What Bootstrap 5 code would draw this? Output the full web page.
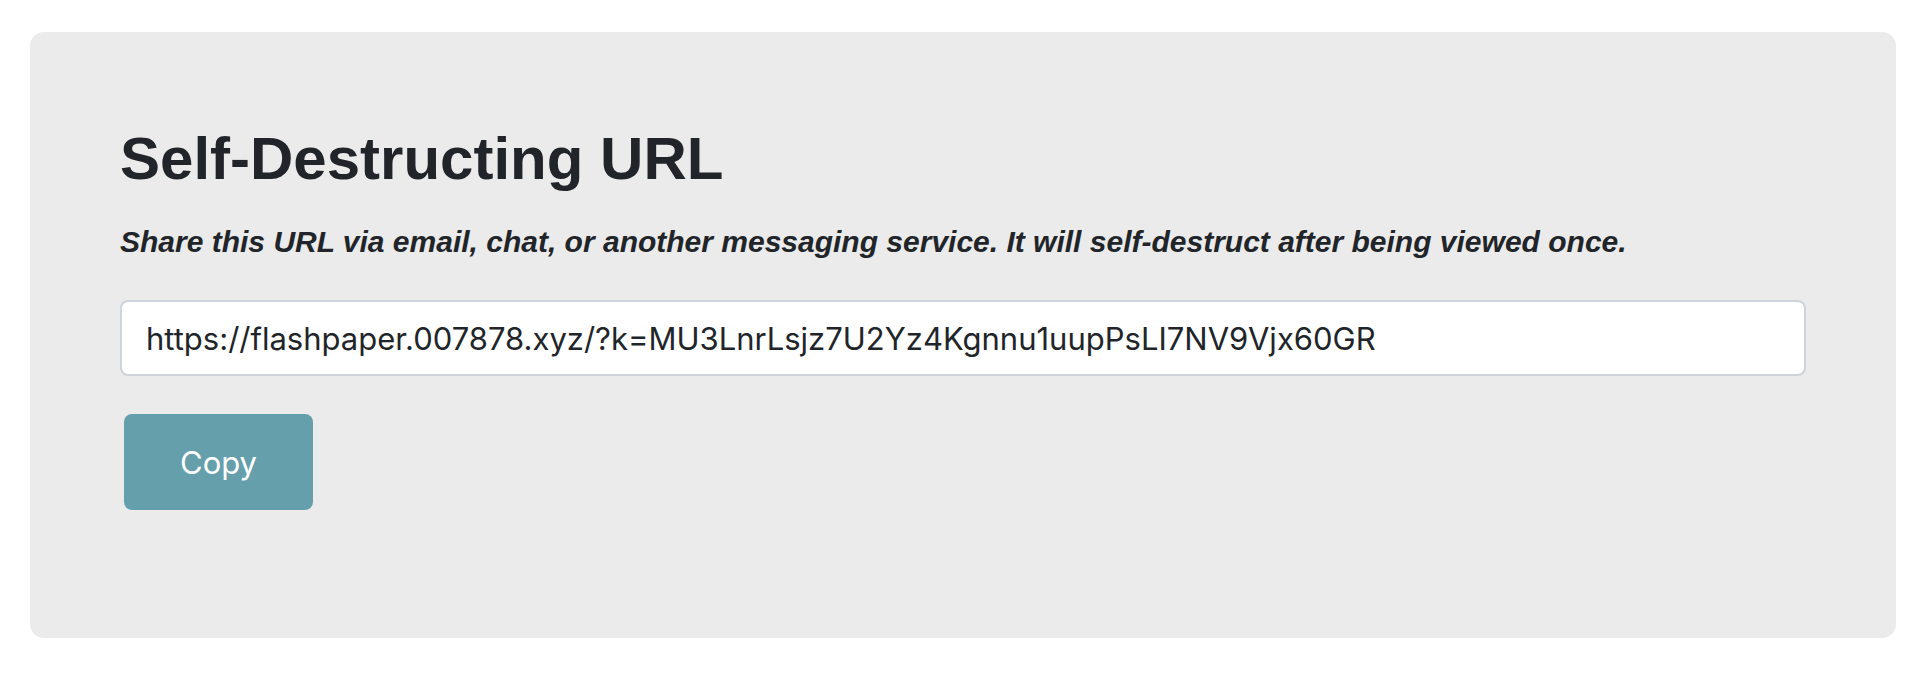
<!DOCTYPE html>
<html lang="en">
<head>
<meta charset="utf-8">
<meta name="viewport" content="width=device-width, initial-scale=1">
<title>Self-Destructing URL</title>
<link href="https://cdn.jsdelivr.net/npm/bootstrap@5.3.0/dist/css/bootstrap.min.css" rel="stylesheet">
<style>
body { font-family: Inter, sans-serif; background: #fff; }
.page-wrap { padding: 32px 36px 38px 30px; }
.panel { background: #ebebeb; border-radius: 14px; padding: 91px 90px 128px; }
.panel h1 { font: bold 60px/72px "Liberation Sans", Arial, sans-serif; margin: 0 0 29px; color: #212529; }
.share-note { font: italic bold 30px/36px "Liberation Sans", Arial, sans-serif; margin: 0 0 40px; color: #212529; }
.url-field { font-size: 31px; line-height: 48px; padding: 13px 24px 11px; border: 2px solid #ced4da; border-radius: 8px; color: #212529; }
.btn-copy { --bs-btn-color: #fff; --bs-btn-bg: #659fac; --bs-btn-hover-color: #fff; --bs-btn-hover-bg: #548c98; font-size: 31px; line-height: 48px; padding: 25px 56px 23px; border: 0; border-radius: 8px; margin: 38px 4px 0; }
</style>
</head>
<body>
<main class="page-wrap">
<section class="panel">
<h1>Self-Destructing URL</h1>
<p class="share-note" id="note">Share this URL via email, chat, or another messaging service. It will self-destruct after being viewed once.</p>
<input class="form-control url-field" type="text" aria-labelledby="note" readonly value="https://flashpaper.007878.xyz/?k=MU3LnrLsjz7U2Yz4Kgnnu1uupPsLI7NV9Vjx60GR">
<button type="button" class="btn btn-copy">Copy</button>
</section>
</main>
<script src="https://cdn.jsdelivr.net/npm/bootstrap@5.3.0/dist/js/bootstrap.bundle.min.js"></script>
</body>
</html>
